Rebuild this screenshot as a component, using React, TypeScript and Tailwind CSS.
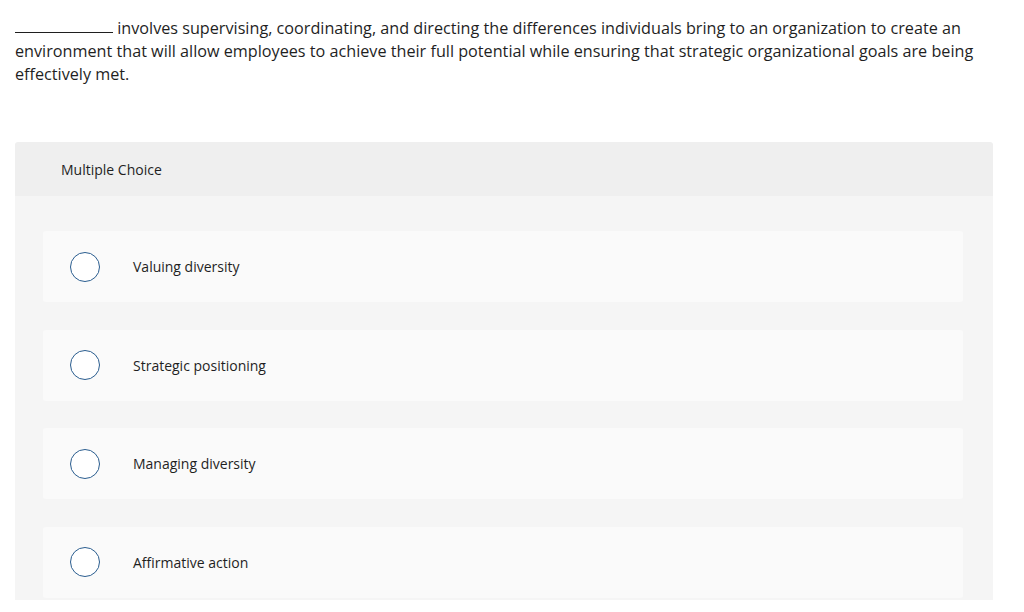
import React from 'react';

const OPTIONS = ['Valuing diversity', 'Strategic positioning', 'Managing diversity', 'Affirmative action'];

export default function App() {
  return (
    <div className="min-h-[612px] bg-white text-[#1f1f1f]" style={{ fontFamily: '"Open Sans", "Noto Sans", sans-serif' }}>
      <div className="px-[15px] pt-[17px]">
        {/* Question */}
        <p className="text-[16.2px] leading-[23px] w-[980px]">
          <span className="inline-block w-[98px] border-b border-[#1f1f1f] align-baseline translate-y-[-1px]"></span> involves supervising, coordinating, and directing the differences individuals bring to an organization to create an environment that will allow employees to achieve their full potential while ensuring that strategic organizational goals are being effectively met.
        </p>

        {/* Answer panel */}
        <div className="mt-[56px] w-[978px] rounded-t-[3px] overflow-hidden">
          <div className="h-[54px] bg-[#efefef] flex items-center pl-[46px] text-[14px]">Multiple Choice</div>
          <div className="bg-[#f5f5f5] pl-[28px] pr-[30px] pt-[35px] pb-[2px] flex flex-col gap-[27.5px]">
            {OPTIONS.map((opt) => (
              <div key={opt} className="h-[71px] rounded-[3px] bg-[#fafafa] flex items-center pl-[27px]">
                <span className="w-[30px] h-[30px] rounded-full border-[1.5px] border-[#2a5d8f] bg-white shrink-0"></span>
                <span className="ml-[33px] text-[14px]">{opt}</span>
              </div>
            ))}
          </div>
        </div>
      </div>
    </div>
  );
}
